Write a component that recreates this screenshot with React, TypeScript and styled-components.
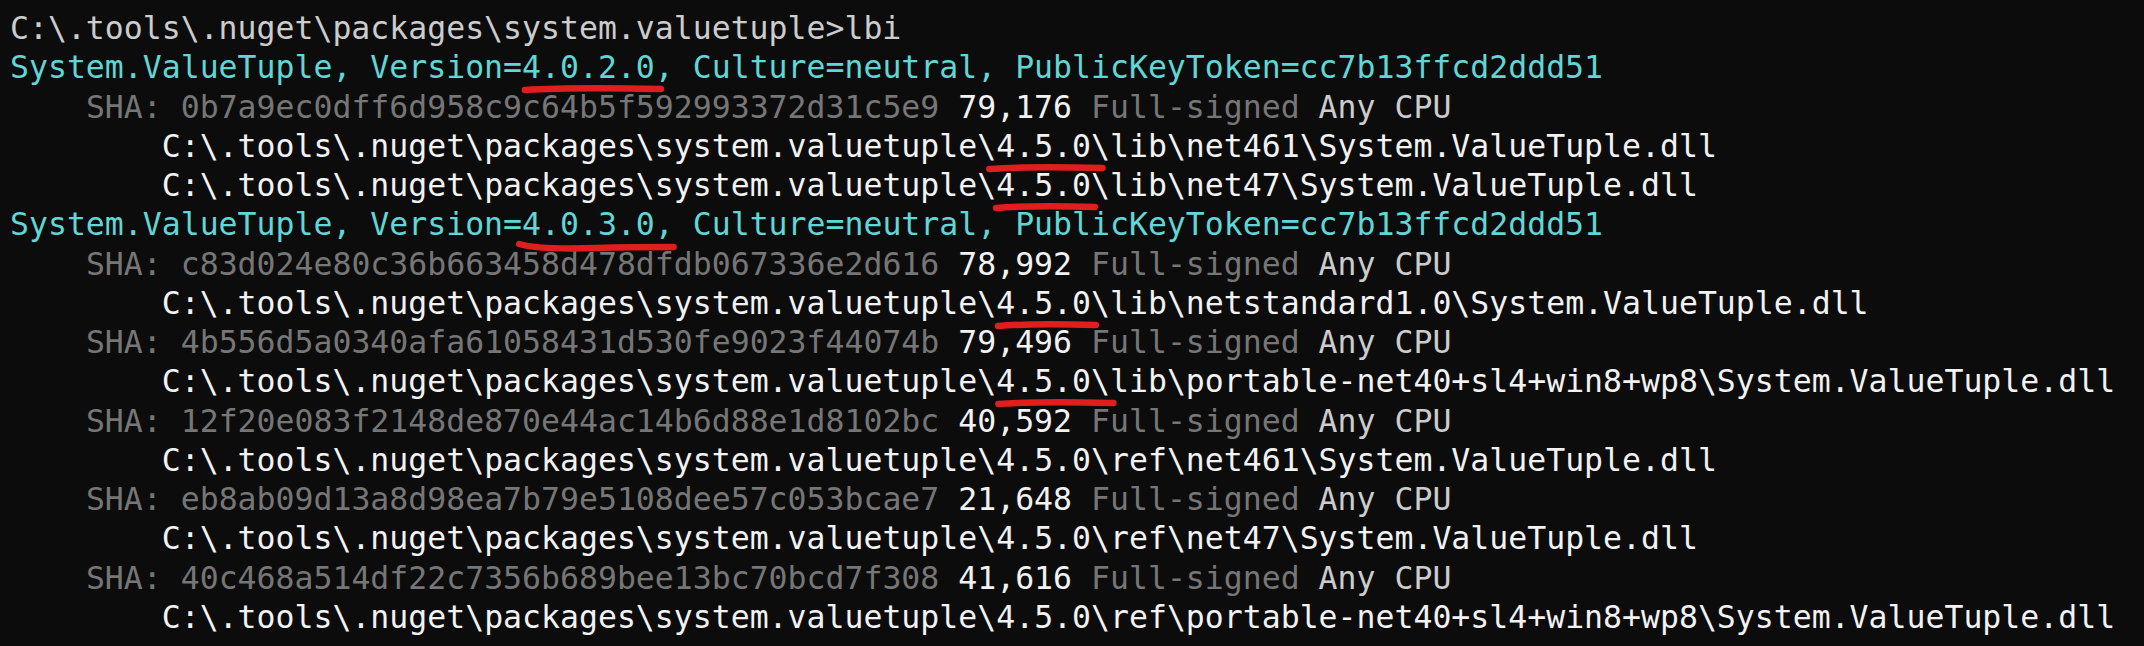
import React from "react";
import styled, { createGlobalStyle } from "styled-components";

const GlobalStyle = createGlobalStyle`
  html, body {
    margin: 0;
    padding: 0;
    background: #0c0c0c;
  }
`;

const tones = {
  prompt: "#cccccc",
  cyan: "#61d6d6",
  dim: "#767676",
  bright: "#f2f2f2",
  plain: "#cccccc",
};

type Tone = keyof typeof tones;

const Screen = styled.div`
  width: 2144px;
  height: 646px;
  box-sizing: border-box;
  padding: 9px 0 0 10px;
  background: #0c0c0c;
  overflow: hidden;
  font-family: "DejaVu Sans Mono", "Liberation Mono", monospace;
  font-size: 31.5px;
  line-height: 39.25px;
  display: flex;
  flex-direction: column;
`;

const Line = styled.div<{ $indent: number }>`
  white-space: pre;
  padding-left: ${(p) => p.$indent * 18.97}px;
`;

const Part = styled.span<{ $tone: Tone }>`
  color: ${(p) => tones[p.$tone]};
`;

const Marked = styled.span`
  position: relative;
`;

const Scribble = styled.svg<{ $l: number; $r: number }>`
  position: absolute;
  left: ${(p) => p.$l}px;
  top: calc(100% - 3px);
  height: 14px;
  width: calc(100% - ${(p) => p.$l + p.$r}px);
  overflow: visible;
  pointer-events: none;
`;

const Mark: React.FC<{ children: React.ReactNode; l?: number; r?: number; curl?: boolean }> = ({
  children,
  l = 0,
  r = 0,
  curl,
}) => (
  <Marked>
    {children}
    <Scribble $l={l} $r={r} viewBox="0 0 100 14" preserveAspectRatio="none">
      <path
        d={curl ? "M2 5 C 12 10, 30 10, 50 9 S 85 8, 98 8" : "M2 8 C 25 6, 60 6, 98 7"}
        stroke="#e01e1e"
        strokeWidth={6.5}
        strokeLinecap="round"
        fill="none"
        vectorEffect="non-scaling-stroke"
      />
    </Scribble>
  </Marked>
);

const ROOT = "C:\\.tools\\.nuget\\packages\\system.valuetuple\\";

const Assembly: React.FC<{ version: string; l: number; r: number; curl?: boolean }> = ({
  version,
  l,
  r,
  curl,
}) => (
  <Line $indent={0}>
    <Part $tone="cyan">
      System.ValueTuple, Version=
      <Mark l={l} r={r} curl={curl}>
        {version}
      </Mark>
      , Culture=neutral, PublicKeyToken=cc7b13ffcd2ddd51
    </Part>
  </Line>
);

const Sha: React.FC<{ hash: string; size: string }> = ({ hash, size }) => (
  <Line $indent={4}>
    <Part $tone="dim">SHA: {hash} </Part>
    <Part $tone="bright">{size} </Part>
    <Part $tone="dim">Full-signed </Part>
    <Part $tone="plain">Any CPU</Part>
  </Line>
);

const FilePath: React.FC<{ rest: string; mark?: { l: number; r: number } }> = ({ rest, mark }) => (
  <Line $indent={8}>
    <Part $tone="bright">
      {ROOT}
      {mark ? (
        <Mark l={mark.l} r={mark.r}>
          4.5.0
        </Mark>
      ) : (
        "4.5.0"
      )}
      \{rest}
    </Part>
  </Line>
);

export default function App() {
  return (
    <>
      <GlobalStyle />
      <Screen>
        <Line $indent={0}>
          <Part $tone="prompt">C:\.tools\.nuget\packages\system.valuetuple&gt;lbi</Part>
        </Line>
        <Assembly version="4.0.2.0" l={0} r={-9} />
        <Sha hash="0b7a9ec0dff6d958c9c64b5f592993372d31c5e9" size="79,176" />
        <FilePath rest="lib\net461\System.ValueTuple.dll" mark={{ l: -9, r: -14 }} />
        <FilePath rest="lib\net47\System.ValueTuple.dll" mark={{ l: -2, r: -6 }} />
        <Assembly version="4.0.3.0" l={-6} r={-22} curl />
        <Sha hash="c83d024e80c36b663458d478dfdb067336e2d616" size="78,992" />
        <FilePath rest="lib\netstandard1.0\System.ValueTuple.dll" mark={{ l: 0, r: -7 }} />
        <Sha hash="4b556d5a0340afa61058431d530fe9023f44074b" size="79,496" />
        <FilePath
          rest="lib\portable-net40+sl4+win8+wp8\System.ValueTuple.dll"
          mark={{ l: 0, r: -25 }}
        />
        <Sha hash="12f20e083f2148de870e44ac14b6d88e1d8102bc" size="40,592" />
        <FilePath rest="ref\net461\System.ValueTuple.dll" />
        <Sha hash="eb8ab09d13a8d98ea7b79e5108dee57c053bcae7" size="21,648" />
        <FilePath rest="ref\net47\System.ValueTuple.dll" />
        <Sha hash="40c468a514df22c7356b689bee13bc70bcd7f308" size="41,616" />
        <FilePath rest="ref\portable-net40+sl4+win8+wp8\System.ValueTuple.dll" />
      </Screen>
    </>
  );
}
